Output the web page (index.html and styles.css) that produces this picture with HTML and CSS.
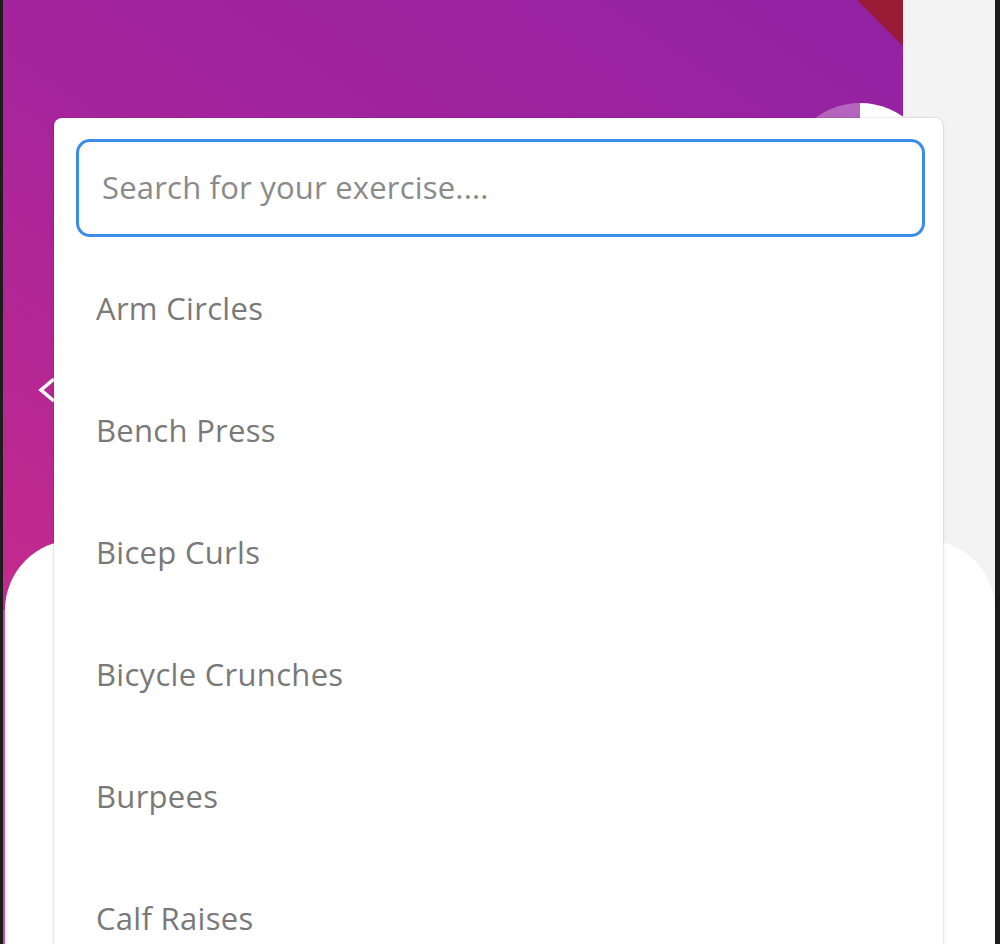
FILE: index.html
```html
<!DOCTYPE html>
<html lang="en">
<head>
<meta charset="utf-8">
<title>Exercise search</title>
<link rel="stylesheet" href="styles.css">
</head>
<body>
<div class="frame">
  <header class="hero">
    <span class="hero-ring"></span>
    <button class="back" aria-label="Back">
      <svg width="20" height="28" viewBox="0 0 20 28"><path d="M17 3 L4 14 L17 25" fill="none" stroke="#fff" stroke-width="3.6" stroke-linejoin="miter"/></svg>
    </button>
  </header>
  <main class="panel"></main>

  <div class="dropdown">
    <div class="search">
      <input class="search-input" type="text" placeholder="Search for your exercise....">
    </div>
    <ul class="options">
      <li class="option">Arm Circles</li>
      <li class="option">Bench Press</li>
      <li class="option">Bicep Curls</li>
      <li class="option">Bicycle Crunches</li>
      <li class="option">Burpees</li>
      <li class="option">Calf Raises</li>
      <li class="option">Chest Fly</li>
    </ul>
  </div>
</div>
</body>
</html>
```

FILE: styles.css
```css
* { box-sizing: border-box; }
html, body { margin: 0; padding: 0; }
body {
  width: 1000px;
  height: 944px;
  overflow: hidden;
  background: #1b1b1b;
  font-family: "Open Sans", "Noto Sans", sans-serif;
}
.frame {
  position: relative;
  width: 1000px;
  height: 944px;
  overflow: hidden;
  background: linear-gradient(to right, #d24ca0 0 2px, #f3f3f3 2px);
  border-left: 3px solid #1c1c1c;
  border-right: 5px solid #1c1c1c;
}
.hero {
  position: relative;
  width: 900px;
  height: 610px;
  overflow: hidden;
  background:
    linear-gradient(45deg, transparent 49%, #9a1b36 51%) right top / 46px 46px no-repeat,
    linear-gradient(to top right, #c42a8c 0%, #a6249c 45%, #9222a3 100%);
  padding: 376px 0 0 32px;
}
.hero-ring {
  position: absolute;
  left: 782px;
  top: 103px;
  width: 150px;
  height: 150px;
  border-radius: 50%;
  background: linear-gradient(to right, rgba(255,255,255,0.3) 50%, #ffffff 50%);
}
.back {
  display: block;
  width: 24px;
  height: 30px;
  padding: 0;
  border: 0;
  background: none;
}
.panel {
  position: relative;
  display: block;
  height: 404px;
  margin: -70px 0 0 2px;
  background: #ffffff;
  border-radius: 70px 70px 0 0;
}
.dropdown {
  position: absolute;
  left: 51px;
  top: 118px;
  width: 889px;
  height: 900px;
  background: #ffffff;
  border-radius: 8px;
  box-shadow: 0 0 0 1px rgba(0,0,0,0.05), 0 1px 4px rgba(0,0,0,0.10);
  padding: 21px 18px 0 22px;
}
.search-input {
  display: block;
  width: 849px;
  height: 98px;
  border: 3px solid #3a8ee8;
  border-radius: 14px;
  padding: 0 0 2px 23px;
  font-family: "Open Sans", "Noto Sans", sans-serif;
  font-size: 31px;
  font-weight: 500;
  letter-spacing: 0.2px;
  color: #555;
  outline: none;
  background: #fff;
}
.search-input::placeholder {
  color: #8a8a8a;
  opacity: 1;
}
.options {
  list-style: none;
  margin: 10px 0 0;
  padding: 0;
}
.option {
  height: 122px;
  line-height: 122px;
  padding-left: 20px;
  font-size: 31px;
  font-weight: 500;
  letter-spacing: 0.3px;
  color: #797979;
}
```
